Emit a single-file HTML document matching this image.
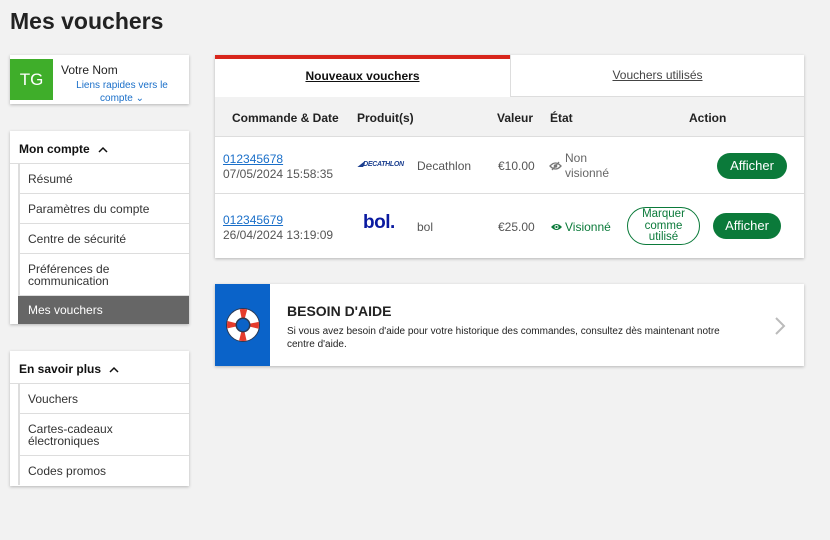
<!DOCTYPE html>
<html><head><meta charset="utf-8"><style>
*{box-sizing:border-box;margin:0;padding:0}
body{width:830px;height:540px;background:#f2f2f2;font-family:"Liberation Sans",sans-serif;color:#333;position:relative;overflow:hidden;font-size:12px}
.abs{position:absolute}
.card{position:absolute;background:#fff;box-shadow:0 1px 3px rgba(0,0,0,.25)}
h1{position:absolute;left:10px;top:8px;font-size:23px;font-weight:bold;color:#222}
.menu .hd{height:33px;line-height:36px;padding-left:9px;font-weight:bold;font-size:12px;color:#111;border-bottom:1px solid #ddd}
.menu .it{margin-left:8px;border-left:2px solid #ddd;border-bottom:1px solid #ddd;padding-left:8px;font-size:12px;color:#333;display:flex;align-items:center;line-height:12px}
.menu .it.act{background:#666;color:#fff;border-left-color:#666}
a{color:#1a6fc9;text-decoration:underline}
.th{position:absolute;top:111px;font-weight:bold;font-size:12px;color:#222}
.btn{position:absolute;background:#0b7a3a;color:#fff;border-radius:13px;height:26px;font-size:13px;text-align:center;line-height:26px}
.chev{display:inline-block;vertical-align:middle;margin-left:8px}
</style></head><body>
<h1>Mes vouchers</h1>

<div class="card" style="left:10px;top:55px;width:179px;height:49px">
 <div class="abs" style="left:0;top:4px;width:43px;height:41px;background:#3fae2a;color:#fff;font-size:17px;line-height:41px;text-align:center">TG</div>
 <div class="abs" style="left:51px;top:8px;font-size:12px;color:#222">Votre Nom</div>
 <div class="abs" style="left:52px;top:24px;width:120px;text-align:center;font-size:10px;color:#1a6fc9;line-height:13px">Liens rapides vers le compte ⌄</div>
</div>

<div class="card menu" style="left:10px;top:131px;width:179px;height:193px">
 <div class="hd">Mon compte<svg class="chev" width="10" height="7"><path d="M1 6 L5 2 L9 6" fill="none" stroke="#111" stroke-width="1.5"/></svg></div>
 <div class="it" style="height:30px">Résumé</div>
 <div class="it" style="height:30px">Paramètres du compte</div>
 <div class="it" style="height:30px">Centre de sécurité</div>
 <div class="it" style="height:42px">Préférences de<br>communication</div>
 <div class="it act" style="height:28px;border-bottom:0">Mes vouchers</div>
</div>

<div class="card menu" style="left:10px;top:351px;width:179px;height:135px">
 <div class="hd">En savoir plus<svg class="chev" width="10" height="7"><path d="M1 6 L5 2 L9 6" fill="none" stroke="#111" stroke-width="1.5"/></svg></div>
 <div class="it" style="height:30px">Vouchers</div>
 <div class="it" style="height:42px">Cartes-cadeaux<br>électroniques</div>
 <div class="it" style="height:29px;border-bottom:0">Codes promos</div>
</div>

<div class="card" style="left:215px;top:55px;width:589px;height:203px">
 <div class="abs" style="left:0;top:0;width:295px;height:4px;background:#d8261c"></div>
 <div class="abs" style="left:0;top:4px;width:295px;height:37px;text-align:center;line-height:34px;font-weight:bold;font-size:12px;color:#111;text-decoration:underline">Nouveaux vouchers</div>
 <div class="abs" style="left:295px;top:0;width:294px;height:42px;background:#fff;border-left:1px solid #ddd;border-bottom:1px solid #ddd;text-align:center;line-height:40px;font-size:12px;color:#444;text-decoration:underline">Vouchers utilisés</div>
 <div class="abs" style="left:0;top:42px;width:589px;height:40px;background:#f2f2f2;border-bottom:1px solid #ddd"></div>
</div>
<div class="th" style="left:232px">Commande &amp; Date</div>
<div class="th" style="left:357px">Produit(s)</div>
<div class="th" style="left:497px">Valeur</div>
<div class="th" style="left:550px">État</div>
<div class="th" style="left:689px">Action</div>
<div class="abs" style="left:215px;top:193px;width:589px;height:1px;background:#ddd"></div>

<a class="abs" style="left:223px;top:152px;font-size:12px">012345678</a>
<div class="abs" style="left:223px;top:167px;font-size:12px;color:#555">07/05/2024 15:58:35</div>
<div class="abs" style="left:358px;top:160px;font-size:7px;font-weight:bold;color:#1b3f8f;font-style:italic;letter-spacing:-.3px">◢DECATHLON</div>
<div class="abs" style="left:417px;top:159px;font-size:12px;color:#555">Decathlon</div>
<div class="abs" style="left:498px;top:159px;font-size:12px;color:#555">€10.00</div>
<svg class="abs" style="left:549px;top:161px" width="13" height="10"><path d="M1 5 Q6.5 -1 12 5 Q6.5 11 1 5Z" fill="none" stroke="#777" stroke-width="1.3"/><circle cx="6.5" cy="5" r="1.8" fill="#777"/><path d="M3 9 L10 1" stroke="#777" stroke-width="1.3"/></svg>
<div class="abs" style="left:565px;top:151px;font-size:12px;color:#666;line-height:15px">Non<br>visionné</div>
<div class="btn" style="left:717px;top:153px;width:70px">Afficher</div>

<a class="abs" style="left:223px;top:213px;font-size:12px">012345679</a>
<div class="abs" style="left:223px;top:228px;font-size:12px;color:#555">26/04/2024 13:19:09</div>
<div class="abs" style="left:363px;top:212px;font-size:19px;font-weight:bold;color:#0a1aa0;letter-spacing:-.5px">bol.</div>
<div class="abs" style="left:417px;top:220px;font-size:12px;color:#555">bol</div>
<div class="abs" style="left:498px;top:220px;font-size:12px;color:#555">€25.00</div>
<svg class="abs" style="left:550px;top:222px" width="13" height="10"><path d="M1 5 Q6.5 -1 12 5 Q6.5 11 1 5Z" fill="#0b7a3a"/><circle cx="6.5" cy="5" r="2" fill="#fff"/><circle cx="6.5" cy="5" r="1.1" fill="#0b7a3a"/></svg>
<div class="abs" style="left:565px;top:220px;font-size:12px;color:#0b7a3a">Visionné</div>
<div class="abs" style="left:627px;top:207px;width:73px;height:38px;border:1px solid #0b7a3a;border-radius:19px;color:#0b7a3a;font-size:11.5px;text-align:center;line-height:11.5px;padding-top:1px">Marquer<br>comme<br>utilisé</div>
<div class="btn" style="left:713px;top:213px;width:68px">Afficher</div>

<div class="card" style="left:215px;top:284px;width:589px;height:82px">
 <div class="abs" style="left:0;top:0;width:55px;height:82px;background:#0a63c9">
  <svg class="abs" style="left:11px;top:24px" width="34" height="34" viewBox="0 0 34 34">
   <circle cx="17" cy="17" r="11.5" fill="none" stroke="#2b3a55" stroke-width="11"/>
   <circle cx="17" cy="17" r="11.5" fill="none" stroke="#fff" stroke-width="9"/>
   <circle cx="17" cy="17" r="11.5" fill="none" stroke="#e53b2c" stroke-width="9" stroke-dasharray="5.5 12.56" stroke-dashoffset="2.75"/>
   <circle cx="17" cy="17" r="7" fill="none" stroke="#2b3a55" stroke-width="1"/>
  </svg>
 </div>
 <div class="abs" style="left:72px;top:19px;font-size:14px;font-weight:bold;color:#222">BESOIN D'AIDE</div>
 <div class="abs" style="left:72px;top:41px;font-size:10px;color:#222;line-height:13px;width:450px">Si vous avez besoin d'aide pour votre historique des commandes, consultez dès maintenant notre centre d'aide.</div>
 <svg class="abs" style="left:558px;top:32px" width="14" height="20"><path d="M3 2 L11 10 L3 18" fill="none" stroke="#bbb" stroke-width="2"/></svg>
</div>
</body></html>
